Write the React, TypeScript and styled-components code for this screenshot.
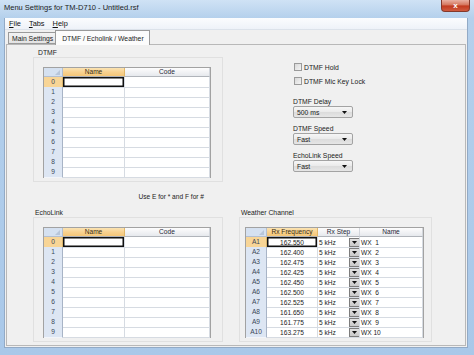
import React from "react";
import styled, { createGlobalStyle } from "styled-components";

const GlobalStyle = createGlobalStyle`
  html, body { margin: 0; padding: 0; }
  body {
    width: 474px; height: 355px; overflow: hidden;
    background: #a8c8ea;
    font-family: "Liberation Sans", Arial, sans-serif;
    color: #222;
  }
  * { box-sizing: border-box; }
`;

const Window = styled.div`
  width: 474px;
  height: 355px;
  display: flex;
  flex-direction: column;
  background: linear-gradient(180deg, #cfe2f5 0px, #b4d0ec 18px, #a9c8e9 100%);
`;

const TitleBar = styled.div`
  height: 18px;
  flex: none;
  display: flex;
  align-items: flex-start;
  padding-left: 4px;
`;

const TitleText = styled.div`
  flex: 1;
  font-size: 7.5px;
  line-height: 16px;
  color: #1c1c1c;
`;

const CloseButton = styled.div`
  width: 29px;
  height: 12px;
  margin-right: 4px;
  border: 1px solid #84382a;
  border-top: none;
  border-radius: 0 0 4px 4px;
  background: linear-gradient(180deg, #e9b0a2 0%, #d67a62 42%, #c23b20 55%, #cf5b3f 100%);
  color: #fff;
  font-size: 8px;
  font-weight: bold;
  display: flex;
  align-items: center;
  justify-content: center;
  line-height: 1;
`;

const Client = styled.div`
  flex: 1;
  margin: 0 6px 7px 4px;
  border: 1px solid #92aac6;
  border-top: none;
  background: #f0f0f0;
  display: flex;
  flex-direction: column;
`;

const MenuBar = styled.div`
  height: 12px;
  flex: none;
  display: flex;
  align-items: center;
  background: linear-gradient(180deg, #fbfcfe 0%, #eef2f8 100%);
  border-bottom: 1px solid #dce2ea;
`;

const MenuItem = styled.span`
  font-size: 7.4px;
  padding: 0 4px;
  color: #111;
`;

const TabStrip = styled.div`
  height: 14px;
  flex: none;
  display: flex;
  align-items: flex-end;
  padding-left: 3px;
`;

const Tab = styled.div<{ $active?: boolean }>`
  font-size: 6.8px;
  display: flex;
  align-items: center;
  border: 1px solid #9a9a9a;
  border-bottom: ${(p) => (p.$active ? "none" : "1px solid #9a9a9a")};
  height: ${(p) => (p.$active ? "15px" : "12px")};
  margin-bottom: ${(p) => (p.$active ? "-1px" : "0")};
  padding: ${(p) => (p.$active ? "0 5px 0 6px" : "0 2px 0 3px")};
  margin-left: ${(p) => (p.$active ? "-1px" : "0")};
  background: ${(p) =>
    p.$active ? "#fcfcfc" : "linear-gradient(180deg, #f3f3f3 0%, #e3e3e3 100%)"};
  position: relative;
  z-index: ${(p) => (p.$active ? 1 : 0)};
`;

const Panel = styled.div`
  flex: 1;
  margin: 0 1px 1px 1px;
  border: 1px solid #b8b8b8;
  background: #f0f0f0;
  display: flex;
  flex-direction: column;
  padding: 3px 0 0 26px;
`;

const Row = styled.div`
  display: grid;
  grid-template-columns: 190px 193px;
  column-gap: 16px;
`;

const Group = styled.div`
  display: flex;
  flex-direction: column;
`;

const GroupLabel = styled.div<{ $indent: number }>`
  height: 9px;
  line-height: 9px;
  font-size: 6.8px;
  padding-left: ${(p) => p.$indent}px;
`;

const GroupBox = styled.div<{ $pl: number }>`
  height: 125px;
  border: 1px solid #e0e0e0;
  padding: 5px 0 0 ${(p) => p.$pl}px;
`;

const Options = styled.div`
  display: flex;
  flex-direction: column;
  padding: 15px 0 0 54px;
`;

const CheckRow = styled.div`
  display: flex;
  align-items: center;
  gap: 2px;
  height: 8px;
  padding-left: 1px;
  font-size: 6.8px;
  & + & {
    margin-top: 6px;
  }
`;

const CheckBox = styled.span`
  width: 8px;
  height: 8px;
  flex: none;
  border: 1px solid #9a9a9a;
  background: linear-gradient(135deg, #d8d8d8 0%, #f4f4f4 100%);
`;

const FieldLabel = styled.div<{ $mt: number }>`
  margin-top: ${(p) => p.$mt}px;
  height: 8px;
  line-height: 8px;
  font-size: 6.8px;
`;

const Select = styled.div`
  width: 60px;
  height: 12px;
  border: 1px solid #a3a3a3;
  border-radius: 2px;
  background: linear-gradient(180deg, #f6f6f6 0%, #ebebeb 45%, #dcdcdc 55%, #e6e6e6 100%);
  display: flex;
  align-items: center;
  padding: 0 5px 0 3px;
  font-size: 6.8px;
`;

const SelectText = styled.span`
  flex: 1;
`;

const Note = styled.div`
  margin-top: 10px;
  height: 10px;
  line-height: 10px;
  font-size: 6.6px;
  width: 190px;
  text-align: right;
  padding-right: 19px;
`;

const BottomRow = styled(Row)`
  margin-top: 6px;
`;

/* ---------- data grid ---------- */

const GridFrame = styled.div`
  display: inline-flex;
  flex-direction: column;
  align-self: flex-start;
  border: 1px solid #a2a2a2;
  background: #fff;
  font-size: 6.6px;
`;

const GridRow = styled.div<{ $cols: string; $h: number }>`
  display: grid;
  grid-template-columns: ${(p) => p.$cols};
  height: ${(p) => p.$h}px;
`;

const Corner = styled.div`
  position: relative;
  background: #d5e1f1;
  border-right: 1px solid #b3bfd1;
  border-bottom: 1px solid #b3bfd1;
  &::after {
    content: "";
    position: absolute;
    right: 2px;
    bottom: 1px;
    width: 0;
    height: 0;
    border-left: 5px solid transparent;
    border-bottom: 5px solid #b8c6da;
  }
`;

const HeadCell = styled.div<{ $active?: boolean }>`
  text-align: center;
  line-height: 8px;
  color: ${(p) => (p.$active ? "#3a2c10" : "#1e2836")};
  border-right: 1px solid ${(p) => (p.$active ? "#e2b869" : "#d2d6dc")};
  border-bottom: 1px solid #b0b4ba;
  background: ${(p) =>
    p.$active
      ? "linear-gradient(180deg, #fbe3b2 0%, #f8d291 50%, #f5c677 100%)"
      : "linear-gradient(180deg, #fdfdfd 0%, #f2f3f5 50%, #e6e9ed 100%)"};
  overflow: hidden;
  white-space: nowrap;
`;

const RowHead = styled.div<{ $active?: boolean }>`
  text-align: center;
  line-height: 10px;
  color: #3a4658;
  background: ${(p) => (p.$active ? "#f8d596" : "#dde6f3")};
  border-right: 1px solid ${(p) => (p.$active ? "#d9b46a" : "#a8b4c6")};
  border-bottom: 1px solid ${(p) => (p.$active ? "#e8c47d" : "#f2f5fa")};
`;

const Cell = styled.div<{ $align?: string; $selected?: boolean }>`
  display: flex;
  align-items: center;
  justify-content: ${(p) => (p.$align === "center" ? "center" : "flex-start")};
  padding: 0 1px;
  white-space: pre;
  color: #222;
  border-right: 1px solid #d6dbe2;
  border-bottom: 1px solid #d6dbe2;
  box-shadow: ${(p) => (p.$selected ? "inset 0 0 0 1.5px #111" : "none")};
  overflow: hidden;
`;

const CellText = styled.span`
  flex: 1;
`;

const DropButton = styled.span`
  width: 10px;
  height: 9px;
  flex: none;
  margin-right: -1px;
  border: 1px solid #7c7c7c;
  border-right: none;
  background: linear-gradient(180deg, #e2e2e2 0%, #c9c9c9 100%);
  display: flex;
  align-items: flex-end;
  justify-content: center;
  padding-bottom: 2px;
`;

const Arrow = ({ w = 5, h = 3 }: { w?: number; h?: number }) => (
  <svg width={w} height={h} viewBox={`0 0 ${w} ${h}`}>
    <polygon points={`0,0 ${w},0 ${w / 2},${h}`} fill="#111" />
  </svg>
);

type Col = { title: string; width: number; align?: string; drop?: boolean };

const DataGrid = ({
  headWidth,
  cols,
  rows,
  activeCol,
}: {
  headWidth: number;
  cols: Col[];
  rows: { head: string; cells: string[] }[];
  activeCol: number;
}) => {
  const template = [headWidth, ...cols.map((c) => c.width)].map((w) => `${w}px`).join(" ");
  return (
    <GridFrame>
      <GridRow $cols={template} $h={9}>
        <Corner />
        {cols.map((c, i) => (
          <HeadCell key={c.title} $active={i === activeCol}>
            {c.title}
          </HeadCell>
        ))}
      </GridRow>
      {rows.map((r, ri) => (
        <GridRow key={r.head} $cols={template} $h={10}>
          <RowHead $active={ri === 0}>{r.head}</RowHead>
          {cols.map((c, ci) => (
            <Cell key={c.title} $align={c.align} $selected={ri === 0 && ci === activeCol}>
              {c.drop ? (
                <>
                  <CellText>{r.cells[ci]}</CellText>
                  <DropButton>
                    <Arrow w={5} h={3} />
                  </DropButton>
                </>
              ) : (
                r.cells[ci]
              )}
            </Cell>
          ))}
        </GridRow>
      ))}
    </GridFrame>
  );
};

const codeRows = Array.from({ length: 10 }, (_, i) => ({ head: String(i), cells: ["", ""] }));
const codeCols: Col[] = [
  { title: "Name", width: 62 },
  { title: "Code", width: 85 },
];

const freqs = [
  "162.550",
  "162.400",
  "162.475",
  "162.425",
  "162.450",
  "162.500",
  "162.525",
  "161.650",
  "161.775",
  "163.275",
];
const weatherRows = freqs.map((f, i) => ({
  head: `A${i + 1}`,
  cells: [f, "5 kHz", i + 1 < 10 ? `WX  ${i + 1}` : `WX ${i + 1}`],
}));
const weatherCols: Col[] = [
  { title: "Rx Frequency", width: 51, align: "center" },
  { title: "Rx Step", width: 42, drop: true },
  { title: "Name", width: 63 },
];

const Field = ({ label, value, mt }: { label: string; value: string; mt: number }) => (
  <>
    <FieldLabel $mt={mt}>{label}</FieldLabel>
    <Select>
      <SelectText>{value}</SelectText>
      <Arrow w={5} h={3} />
    </Select>
  </>
);

export default function App() {
  return (
    <>
      <GlobalStyle />
      <Window>
        <TitleBar>
          <TitleText>Menu Settings for TM-D710 - Untitled.rsf</TitleText>
          <CloseButton>x</CloseButton>
        </TitleBar>
        <Client>
          <MenuBar>
            <MenuItem>
              <u>F</u>ile
            </MenuItem>
            <MenuItem>
              <u>T</u>abs
            </MenuItem>
            <MenuItem>
              <u>H</u>elp
            </MenuItem>
          </MenuBar>
          <TabStrip>
            <Tab>Main Settings</Tab>
            <Tab $active>DTMF / Echolink / Weather</Tab>
          </TabStrip>
          <Panel>
            <Row>
              <Group>
                <GroupLabel $indent={5}>DTMF</GroupLabel>
                <GroupBox $pl={9}>
                  <DataGrid headWidth={19} cols={codeCols} rows={codeRows} activeCol={0} />
                </GroupBox>
              </Group>
              <Options>
                <CheckRow>
                  <CheckBox />
                  DTMF Hold
                </CheckRow>
                <CheckRow>
                  <CheckBox />
                  DTMF Mic Key Lock
                </CheckRow>
                <Field label="DTMF Delay" value="500 ms" mt={13} />
                <Field label="DTMF Speed" value="Fast" mt={7} />
                <Field label="EchoLink Speed" value="Fast" mt={7} />
              </Options>
            </Row>
            <Note>Use E for * and F for #</Note>
            <BottomRow>
              <Group>
                <GroupLabel $indent={2}>EchoLink</GroupLabel>
                <GroupBox $pl={9}>
                  <DataGrid headWidth={19} cols={codeCols} rows={codeRows} activeCol={0} />
                </GroupBox>
              </Group>
              <Group>
                <GroupLabel $indent={2}>Weather Channel</GroupLabel>
                <GroupBox $pl={5}>
                  <DataGrid headWidth={21} cols={weatherCols} rows={weatherRows} activeCol={0} />
                </GroupBox>
              </Group>
            </BottomRow>
          </Panel>
        </Client>
      </Window>
    </>
  );
}
